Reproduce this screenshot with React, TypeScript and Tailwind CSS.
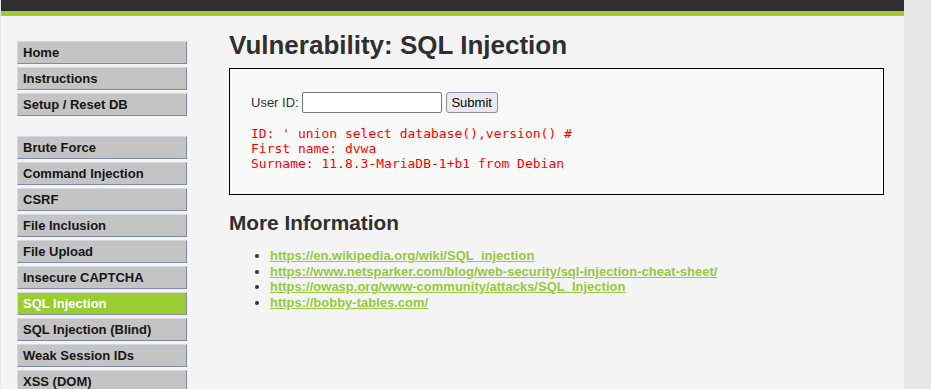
import React from 'react';

const menuGroups: string[][] = [
  ['Home', 'Instructions', 'Setup / Reset DB'],
  [
    'Brute Force',
    'Command Injection',
    'CSRF',
    'File Inclusion',
    'File Upload',
    'Insecure CAPTCHA',
    'SQL Injection',
    'SQL Injection (Blind)',
    'Weak Session IDs',
    'XSS (DOM)',
  ],
];

const links = [
  'https://en.wikipedia.org/wiki/SQL_injection',
  'https://www.netsparker.com/blog/web-security/sql-injection-cheat-sheet/',
  'https://owasp.org/www-community/attacks/SQL_Injection',
  'https://bobby-tables.com/',
];

const selected = 'SQL Injection';

const MenuItem: React.FC<{ label: string }> = ({ label }) => {
  const isSelected = label === selected;
  return (
    <li>
      <a
        href="#"
        className={`block border border-[#7f8aa6] border-t-[#d6d8de] border-l-[#d6d8de] py-[3px] pl-[5px] text-[13px] font-bold leading-[15px] ${
          isSelected ? 'bg-[#9acd32] text-white' : 'bg-[#c4c4c4] text-[#161616]'
        }`}
      >
        {label}
      </a>
    </li>
  );
};

export default function App() {
  return (
    <div
      className="min-h-screen w-full bg-[#e7e7e7]"
      style={{ fontFamily: '"Liberation Sans", Arial, sans-serif' }}
    >
      <div className="ml-px min-h-[389px] w-[903px] overflow-hidden bg-[#f4f4f4]">
        <div className="h-[11px] bg-[#2f2f2f]" />
        <div className="h-[5px] bg-[#a6c936]" />

        <div className="flex">
          {/* Left menu */}
          <div className="w-[186px] shrink-0 pl-[16px] pt-[25px]">
            {menuGroups.map((group, gi) => (
              <ul key={gi} className={`flex flex-col gap-[3px] ${gi > 0 ? 'mt-[20px]' : ''}`}>
                {group.map(item => (
                  <MenuItem key={item} label={item} />
                ))}
              </ul>
            ))}
          </div>

          {/* Main body */}
          <div className="ml-[42px] w-[655px] pt-[14px] text-[13px] text-[#333]">
            <h1 className="text-[26px] font-bold leading-[30px] text-[#2f2f2f]">
              Vulnerability: SQL Injection
            </h1>

            <div className="mt-2 h-[127px] border border-black bg-[#f8faf9] pl-[21px] pt-[23px]">
              <form className="flex h-[21px] items-center" onSubmit={e => e.preventDefault()}>
                <span className="mr-[3px] leading-[15px]">User ID:</span>
                <input
                  type="text"
                  className="h-[21px] w-[140px] rounded-[2px] border border-[#767676] bg-white px-1 text-[13px] outline-none"
                />
                <button
                  type="submit"
                  className="ml-[4px] h-[21px] w-[52px] rounded-[3px] border border-[#8f8f9d] bg-[#e9e9ed] text-[13px] leading-[15px] text-black"
                >
                  Submit
                </button>
              </form>
              <pre
                className="mt-[13px] text-[13px] leading-[15px] text-[#ff0000]"
                style={{ fontFamily: '"DejaVu Sans Mono", "Liberation Mono", monospace' }}
              >
                {"ID: ' union select database(),version() #\nFirst name: dvwa\nSurname: 11.8.3-MariaDB-1+b1 from Debian"}
              </pre>
            </div>

            <h2 className="mt-[16px] text-[20.8px] font-bold leading-[24px] text-[#2f2f2f]">
              More Information
            </h2>
            <ul className="mt-[13px] list-disc pl-[41px]">
              {links.map(href => (
                <li key={href} className="text-[13px] leading-[15.7px] text-[#333]">
                  <a href="#" className="font-bold text-[#98c93c] underline">
                    {href}
                  </a>
                </li>
              ))}
            </ul>
          </div>
        </div>
      </div>
    </div>
  );
}
